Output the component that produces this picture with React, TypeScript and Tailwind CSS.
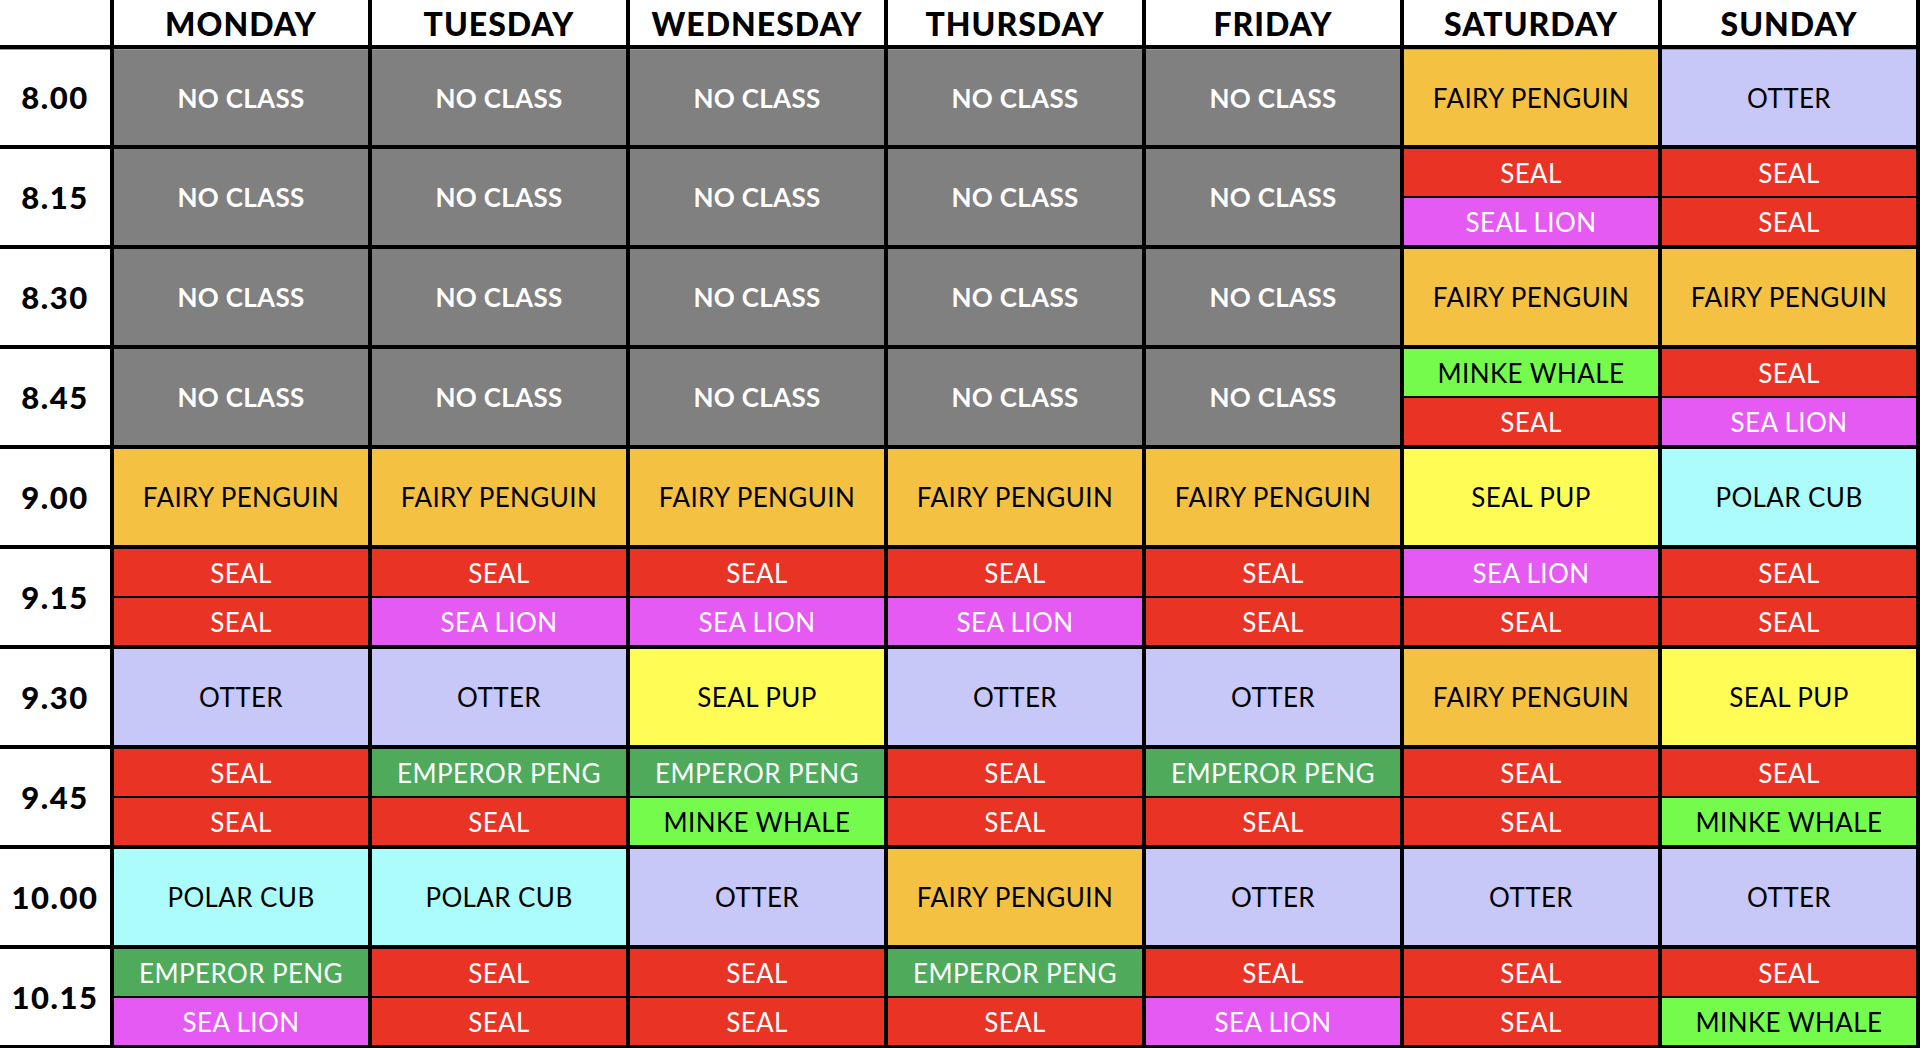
import React from "react";

type K = "no" | "fp" | "ot" | "se" | "sl" | "sll" | "mw" | "ep" | "sp" | "pc";

const STY: Record<K, { bg: string; fg: string; label: string; bold?: boolean }> = {
  no: { bg: "bg-[#808080]", fg: "text-white", label: "NO CLASS", bold: true },
  fp: { bg: "bg-[#f4c143]", fg: "text-black", label: "FAIRY PENGUIN" },
  ot: { bg: "bg-[#c7c7f8]", fg: "text-black", label: "OTTER" },
  se: { bg: "bg-[#e93325]", fg: "text-white", label: "SEAL" },
  sl: { bg: "bg-[#e55af2]", fg: "text-white", label: "SEA LION" },
  sll: { bg: "bg-[#e55af2]", fg: "text-white", label: "SEAL LION" },
  mw: { bg: "bg-[#75fb4c]", fg: "text-black", label: "MINKE WHALE" },
  ep: { bg: "bg-[#4faa5c]", fg: "text-white", label: "EMPEROR PENG" },
  sp: { bg: "bg-[#fffc55]", fg: "text-black", label: "SEAL PUP" },
  pc: { bg: "bg-[#abfcfa]", fg: "text-black", label: "POLAR CUB" },
};

type Cell = K | [K, K];

const DAYS = ["MONDAY", "TUESDAY", "WEDNESDAY", "THURSDAY", "FRIDAY", "SATURDAY", "SUNDAY"];

const ROWS: { t: string; c: Cell[] }[] = [
  { t: "8.00", c: ["no", "no", "no", "no", "no", "fp", "ot"] },
  { t: "8.15", c: ["no", "no", "no", "no", "no", ["se", "sll"], ["se", "se"]] },
  { t: "8.30", c: ["no", "no", "no", "no", "no", "fp", "fp"] },
  { t: "8.45", c: ["no", "no", "no", "no", "no", ["mw", "se"], ["se", "sl"]] },
  { t: "9.00", c: ["fp", "fp", "fp", "fp", "fp", "sp", "pc"] },
  {
    t: "9.15",
    c: [["se", "se"], ["se", "sl"], ["se", "sl"], ["se", "sl"], ["se", "se"], ["sl", "se"], ["se", "se"]],
  },
  { t: "9.30", c: ["ot", "ot", "sp", "ot", "ot", "fp", "sp"] },
  {
    t: "9.45",
    c: [["se", "se"], ["ep", "se"], ["ep", "mw"], ["se", "se"], ["ep", "se"], ["se", "se"], ["se", "mw"]],
  },
  { t: "10.00", c: ["pc", "pc", "ot", "fp", "ot", "ot", "ot"] },
  {
    t: "10.15",
    c: [["ep", "sl"], ["se", "se"], ["se", "se"], ["ep", "se"], ["se", "sl"], ["se", "se"], ["se", "mw"]],
  },
];

function Block({ k, first }: { k: K; first?: boolean }) {
  const s = STY[k];
  return (
    <div
      className={`flex flex-1 items-center justify-center ${s.bg} ${s.fg} ${
        s.bold ? "font-bold text-[26px] tracking-[0.3px]" : "font-normal text-[26px] tracking-[0.4px]"
      } leading-none ${first ? "border-t border-[#9a9a9a]" : ""}`}
    >
      {s.label}
    </div>
  );
}

export default function App() {
  return (
    <div className="w-[1922px] h-[1048px] bg-white overflow-hidden" style={{ fontFamily: "Lato, 'Open Sans', sans-serif" }}>
      <div className="w-[1920px] bg-black pr-[4px] pb-[3px] grid grid-cols-[110px_repeat(7,254px)] grid-rows-[45px_repeat(10,96px)] gap-[4px]">
        <div className="bg-white" />
        {DAYS.map((d) => (
          <div
            key={d}
            className="bg-white flex items-center justify-center text-[32px] font-black leading-none pt-[2px] tracking-[1px]"
          >
            {d}
          </div>
        ))}
        {ROWS.map((r, ri) => (
          <React.Fragment key={r.t}>
            <div
              className={`bg-white flex items-center justify-center text-[31px] font-black leading-none tracking-[1.5px] ${
                ri === 0 ? "border-t border-[#9a9a9a]" : ""
              }`}
            >
              {r.t}
            </div>
            {r.c.map((c, ci) =>
              Array.isArray(c) ? (
                <div key={ci} className="flex flex-col gap-[2px] bg-black">
                  <Block k={c[0]} first={ri === 0} />
                  <Block k={c[1]} />
                </div>
              ) : (
                <div key={ci} className="flex">
                  <Block k={c} first={ri === 0} />
                </div>
              )
            )}
          </React.Fragment>
        ))}
      </div>
    </div>
  );
}
